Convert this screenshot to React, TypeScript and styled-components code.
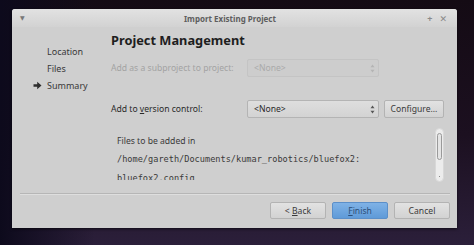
import React from 'react'
import styled, { createGlobalStyle } from 'styled-components'

const GlobalStyle = createGlobalStyle`
    html, body {
        margin: 0;
        padding: 0;
        height: 100%;
    }
    body {
        background: linear-gradient(180deg, #140b14 0%, #1c1020 55%, #2b1f3a 100%);
        font-family: "Noto Sans", "DejaVu Sans", sans-serif;
        overflow: hidden;
    }
`;

const Desktop = styled.div`
    width: 474px;
    height: 245px;
    padding: 9px 0 0 12px;
    box-sizing: border-box;
    background: linear-gradient(90deg, #0d0a1c 0%, rgba(20, 12, 30, 0) 20%);
`;

const Window = styled.div`
    width: 445px;
    height: 219px;
    background: #cfcfcf;
    border-radius: 3px 3px 0 0;
    display: flex;
    flex-direction: column;
    box-shadow: 0 1px 3px rgba(0, 0, 0, 0.6);
    overflow: hidden;
`;

const TitleBar = styled.div`
    height: 18px;
    display: flex;
    align-items: center;
    padding: 0 10px 0 8px;
    background: linear-gradient(180deg, #e2e2e2 0%, #d2d2d2 100%);
    color: #5e5e5e;
    font-size: 8px;
    font-weight: bold;
`;

const MenuMark = styled.span`
    font-size: 6px;
    color: #777;
`;

const TitleText = styled.div`
    flex: 1;
    text-align: center;
    padding-left: 8px;
`;

const TitleButtons = styled.div`
    display: flex;
    gap: 7px;
    color: #8a8a8a;
    font-size: 9px;
`;

const Body = styled.div`
    flex: 1;
    display: flex;
`;

const Sidebar = styled.div`
    width: 99px;
    display: flex;
    flex-direction: column;
    padding-top: 16px;
    box-sizing: border-box;
`;

const NavItem = styled.div`
    height: 17px;
    display: flex;
    align-items: center;
    font-size: 9px;
    color: #383838;
    padding-left: 35px;
    position: relative;
`;

const NavArrow = styled.svg`
    position: absolute;
    left: 21px;
    top: 4px;
`;

const Main = styled.div`
    flex: 1;
    display: flex;
    flex-direction: column;
    padding-top: 3px;
`;

const Heading = styled.h1`
    margin: 0;
    font-size: 12.8px;
    font-weight: bold;
    color: #1e1e1e;
    height: 20px;
    line-height: 20px;
`;

const FormRow = styled.div<{ disabled?: boolean }>`
    display: flex;
    align-items: center;
    height: 18px;
    margin-top: ${p => p.disabled ? '9px' : '23px'};
    color: ${p => p.disabled ? '#a3a3a3' : '#2a2a2a'};
    font-size: 8.6px;
`;

const Label = styled.div`
    width: 136px;
`;

const Combo = styled.div<{ disabled?: boolean }>`
    width: 132px;
    height: 18px;
    box-sizing: border-box;
    border: 1px solid ${p => p.disabled ? '#c4c4c4' : '#b4b4b4'};
    border-radius: 2px;
    background: ${p => p.disabled ? '#cdcdcd' : 'linear-gradient(180deg, #dedede 0%, #d3d3d3 100%)'};
    display: flex;
    align-items: center;
    justify-content: space-between;
    padding: 0 3px 0 6px;
    color: ${p => p.disabled ? '#aaaaaa' : '#2a2a2a'};
`;

const PushButton = styled.button<{ primary?: boolean }>`
    height: 17px;
    box-sizing: border-box;
    border: 1px solid ${p => p.primary ? '#5b8fc9' : '#b3b3b3'};
    border-radius: 2px;
    background: ${p => p.primary
        ? 'linear-gradient(180deg, #7fb2e6 0%, #5f9ad8 100%)'
        : 'linear-gradient(180deg, #e2e2e2 0%, #d2d2d2 100%)'};
    color: ${p => p.primary ? '#2d4f78' : '#3a3a3a'};
    font-family: "Noto Sans", "DejaVu Sans", sans-serif;
    font-size: 8.6px;
    padding: 0;
    width: 56px;
`;

const ConfigureButton = styled(PushButton)`
    width: 60px;
    height: 18px;
    margin-left: 5px;
`;

const FilesBox = styled.div`
    margin-top: 10px;
    height: 54px;
    display: flex;
`;

const FilesText = styled.div`
    flex: 1;
    height: 52px;
    padding: 6px 0 0 6px;
    box-sizing: border-box;
    color: #3a3a3a;
    overflow: hidden;
`;

const FilesTitle = styled.div`
    font-size: 8.6px;
    height: 16px;
    line-height: 14px;
`;

const MonoLine = styled.div`
    font-family: "DejaVu Sans Mono", "Liberation Mono", monospace;
    font-size: 8.6px;
    height: 19px;
    line-height: 19px;
    white-space: nowrap;
`;

const ScrollTrack = styled.div`
    width: 9px;
    height: 54px;
    margin-right: 13px;
    box-sizing: border-box;
    border-radius: 5px;
    background: #ececec;
    border: 1px solid #d8d8d8;
    display: flex;
    justify-content: center;
    padding-top: 4px;
    position: relative;
`;

const ScrollThumb = styled.div`
    width: 5px;
    height: 27px;
    box-sizing: border-box;
    border: 1px solid #9a9a9a;
    border-radius: 3px;
    background: #e4e4e4;
`;

const ScrollDot = styled.div`
    position: absolute;
    bottom: 4px;
    width: 1px;
    height: 1px;
    background: #888;
`;

const Separator = styled.div`
    margin: 0 7px 0 8px;
    height: 1px;
    background: #b6b6b6;
    border-bottom: 1px solid #dedede;
`;

const ButtonRow = styled.div`
    display: flex;
    justify-content: flex-end;
    gap: 6px;
    padding: 7px 7px 0 0;
    height: 33px;
    box-sizing: border-box;
`;

const U = styled.span`
    text-decoration: underline;
`;

function SpinArrows({ color }: { color: string }) {
    return (
        <svg width="5" height="9" viewBox="0 0 5 9">
            <path d="M2.5 0.5 L4.5 3.3 H0.5 Z" fill={color} />
            <path d="M2.5 8.5 L4.5 5.7 H0.5 Z" fill={color} />
        </svg>
    )
}

function App() {
    return (
        <>
            <GlobalStyle />
            <Desktop>
                <Window>
                    <TitleBar>
                        <MenuMark>▼</MenuMark>
                        <TitleText>Import Existing Project</TitleText>
                        <TitleButtons>
                            <span>+</span>
                            <span>✕</span>
                        </TitleButtons>
                    </TitleBar>
                    <Body>
                        <Sidebar>
                            <NavItem>Location</NavItem>
                            <NavItem>Files</NavItem>
                            <NavItem>
                                <NavArrow width="9" height="9" viewBox="0 0 9 9">
                                    <path d="M0.5 3.3 H4.2 V0.8 L8.5 4.5 L4.2 8.2 V5.7 H0.5 Z" fill="#2e2e2e" />
                                </NavArrow>
                                Summary
                            </NavItem>
                        </Sidebar>
                        <Main>
                            <Heading>Project Management</Heading>
                            <FormRow disabled>
                                <Label>Add as a subproject to project:</Label>
                                <Combo disabled>
                                    <span>&lt;None&gt;</span>
                                    <SpinArrows color="#b4b4b4" />
                                </Combo>
                            </FormRow>
                            <FormRow>
                                <Label>Add to <U>v</U>ersion control:</Label>
                                <Combo>
                                    <span>&lt;None&gt;</span>
                                    <SpinArrows color="#555555" />
                                </Combo>
                                <ConfigureButton>Configure...</ConfigureButton>
                            </FormRow>
                            <FilesBox>
                                <FilesText>
                                    <FilesTitle>Files to be added in</FilesTitle>
                                    <MonoLine>/home/gareth/Documents/kumar_robotics/bluefox2:</MonoLine>
                                    <MonoLine>bluefox2.config</MonoLine>
                                </FilesText>
                                <ScrollTrack>
                                    <ScrollThumb />
                                    <ScrollDot />
                                </ScrollTrack>
                            </FilesBox>
                        </Main>
                    </Body>
                    <Separator />
                    <ButtonRow>
                        <PushButton>&lt; <U>B</U>ack</PushButton>
                        <PushButton primary><U>F</U>inish</PushButton>
                        <PushButton>Cancel</PushButton>
                    </ButtonRow>
                </Window>
            </Desktop>
        </>
    )
}

export default App
